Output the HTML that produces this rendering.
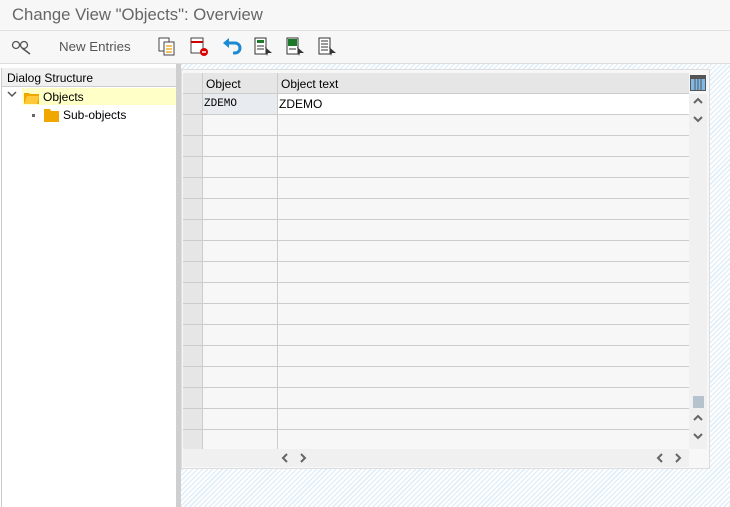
<!DOCTYPE html><html><head><style>
*{margin:0;padding:0;box-sizing:border-box}
body{width:730px;height:507px;overflow:hidden;background:#fff;font-family:"Liberation Sans",Arial,sans-serif;position:relative}
.a{position:absolute}
.t{font-size:12px;color:#000}
.r{position:absolute;left:183px;width:506px;height:1px;background:#ccc}
</style></head><body>
<div class="a" style="left:0;top:0;width:730px;height:31px;background:#f7f7f7;border-bottom:1px solid #e0e0e0"></div>
<div class="a" style="left:12px;top:5px;font-size:16.7px;color:#666">Change View "Objects": Overview</div>
<div class="a" style="left:0;top:31px;width:730px;height:33px;background:#f7f7f7;border-bottom:1px solid #ddd"></div>
<svg class="a" style="left:10px;top:37px" width="22" height="20"><circle cx="6" cy="8" r="3.5" fill="none" stroke="#555" stroke-width="1.3"/><circle cx="14" cy="8" r="3.5" fill="none" stroke="#555" stroke-width="1.3"/><path d="M9 8h2M12 11l8 6" stroke="#555" stroke-width="1.6"/></svg>
<div class="a" style="left:59px;top:39px;font-size:13.3px;color:#555">New Entries</div>
<svg class="a" style="left:158px;top:37px" width="20" height="20"><rect x="1" y="1" width="10" height="13" fill="#fff" stroke="#444"/><rect x="6" y="5" width="10" height="13" fill="#fff" stroke="#444"/><path d="M8 9h6M8 12h6M8 15h6" stroke="#e8a000" stroke-width="1.3"/></svg>
<svg class="a" style="left:190px;top:37px" width="20" height="20"><rect x="1" y="1" width="12" height="15" fill="#fff" stroke="#444"/><rect x="1" y="4" width="12" height="2" fill="#c00"/><circle cx="14" cy="15" r="4" fill="#d00"/><path d="M12 15h4" stroke="#fff" stroke-width="1.5"/></svg>
<svg class="a" style="left:222px;top:37px" width="20" height="20"><path d="M5 6h8a5 5 0 0 1 0 10h-2" fill="none" stroke="#1a8ad4" stroke-width="3"/><path d="M1 6l6-5v10z" fill="#1a8ad4"/></svg>
<svg class="a" style="left:254px;top:37px" width="20" height="20"><rect x="1" y="1" width="11" height="16" fill="#fff" stroke="#333"/><rect x="3" y="3" width="7" height="3" fill="#1a7a2a"/><path d="M3 9h7M3 12h7" stroke="#333"/><path d="M11 10l7 6h-4l-1 3z" fill="#333"/></svg>
<svg class="a" style="left:286px;top:37px" width="20" height="20"><rect x="1" y="1" width="11" height="16" fill="#fff" stroke="#333"/><rect x="2" y="2" width="9" height="7" fill="#1a7a2a"/><path d="M3 12h7" stroke="#333"/><path d="M11 10l7 6h-4l-1 3z" fill="#333"/></svg>
<svg class="a" style="left:318px;top:37px" width="20" height="20"><rect x="1" y="1" width="11" height="16" fill="#fff" stroke="#333"/><path d="M3 4h7M3 7h7M3 10h7M3 13h7" stroke="#333"/><path d="M11 10l7 6h-4l-1 3z" fill="#333"/></svg>
<div class="a" style="left:1px;top:68px;width:175px;height:439px;background:#fff;border-left:1px solid #ccc"></div>
<div class="a" style="left:2px;top:68px;width:174px;height:19px;background:#f0f0f0;border-bottom:1px solid #ccc"></div>
<div class="a t" style="left:7px;top:71px">Dialog Structure</div>
<div class="a" style="left:22px;top:88px;width:154px;height:17px;background:#ffffc8"></div>
<svg class="a" style="left:7px;top:91px" width="10" height="8"><path d="M1 1l4 4 4-4" fill="none" stroke="#555" stroke-width="1.5"/></svg>
<svg class="a" style="left:24px;top:91px" width="16" height="13"><path d="M0 2h5l1 1h9v10H0z" fill="#f0a800"/><path d="M3 5h12l-2 8H0z" fill="#ffc93a"/></svg>
<div class="a t" style="left:43px;top:90px">Objects</div>
<div class="a" style="left:32px;top:114px;width:3px;height:3px;background:#666"></div>
<svg class="a" style="left:44px;top:109px" width="16" height="13"><path d="M0 0h6l1 2h8v11H0z" fill="#f0a800"/></svg>
<div class="a t" style="left:63px;top:108px">Sub-objects</div>
<div class="a" style="left:176px;top:64px;width:5px;height:443px;background:#cfcfcf"></div>
<div class="a" style="left:181px;top:64px;width:549px;height:443px;background:repeating-linear-gradient(135deg,#e3eff8 0 1.5px,#fff 1.5px 3.5px)"></div>
<div class="a" style="left:181px;top:69px;width:529px;height:400px;background:#f7f7f7;border:1px solid #ddd"></div>
<div class="a" style="left:183px;top:73px;width:506px;height:21px;background:#e6e6e6;border-bottom:1px solid #ccc"></div>
<div class="a" style="left:183px;top:94px;width:19px;height:355px;background:#e6e6e6"></div>
<div class="a" style="left:202px;top:73px;width:1px;height:376px;background:#ccc"></div>
<div class="a" style="left:277px;top:73px;width:1px;height:376px;background:#ccc"></div>
<div class="a t" style="left:206px;top:77px">Object</div>
<div class="a t" style="left:281px;top:77px">Object text</div>
<div class="a" style="left:203px;top:94px;width:74px;height:20px;background:#e8ecf0"></div>
<div class="a" style="left:278px;top:94px;width:411px;height:20px;background:#fff"></div>
<div class="a" style="left:204px;top:98px;font:11px 'Liberation Mono',monospace">ZDEMO</div>
<div class="a t" style="left:279px;top:97px">ZDEMO</div>
<svg class="a" style="left:690px;top:75px" width="16" height="16"><rect x="0.5" y="0.5" width="15" height="15" fill="#7fb9e6" stroke="#555"/><rect x="1" y="1" width="14" height="3" fill="#555"/><path d="M5 4v12M8 4v12M11 4v12" stroke="#555"/></svg>
<div class="a" style="left:689px;top:94px;width:18px;height:355px;background:#f0f0f0"></div>
<svg class="a" style="left:692px;top:96px" width="12" height="10"><path d="M2 7l4-4 4 4" fill="none" stroke="#666" stroke-width="2"/></svg>
<svg class="a" style="left:692px;top:114px" width="12" height="10"><path d="M2 3l4 4 4-4" fill="none" stroke="#666" stroke-width="2"/></svg>
<div class="a" style="left:693px;top:396px;width:11px;height:12px;background:#b6c2ce"></div>
<svg class="a" style="left:692px;top:413px" width="12" height="10"><path d="M2 7l4-4 4 4" fill="none" stroke="#666" stroke-width="2"/></svg>
<svg class="a" style="left:692px;top:431px" width="12" height="10"><path d="M2 3l4 4 4-4" fill="none" stroke="#666" stroke-width="2"/></svg>
<div class="a" style="left:183px;top:449px;width:506px;height:18px;background:#f0f0f0"></div>
<svg class="a" style="left:280px;top:452px" width="10" height="12"><path d="M7 2L3 6l4 4" fill="none" stroke="#666" stroke-width="2"/></svg>
<svg class="a" style="left:298px;top:452px" width="10" height="12"><path d="M3 2l4 4-4 4" fill="none" stroke="#666" stroke-width="2"/></svg>
<svg class="a" style="left:655px;top:452px" width="10" height="12"><path d="M7 2L3 6l4 4" fill="none" stroke="#666" stroke-width="2"/></svg>
<svg class="a" style="left:673px;top:452px" width="10" height="12"><path d="M3 2l4 4-4 4" fill="none" stroke="#666" stroke-width="2"/></svg>
<div class="r" style="top:114px"></div><div class="r" style="top:135px"></div><div class="r" style="top:156px"></div><div class="r" style="top:177px"></div><div class="r" style="top:198px"></div><div class="r" style="top:219px"></div><div class="r" style="top:240px"></div><div class="r" style="top:261px"></div><div class="r" style="top:282px"></div><div class="r" style="top:303px"></div><div class="r" style="top:324px"></div><div class="r" style="top:345px"></div><div class="r" style="top:366px"></div><div class="r" style="top:387px"></div><div class="r" style="top:408px"></div><div class="r" style="top:429px"></div>
</body></html>
